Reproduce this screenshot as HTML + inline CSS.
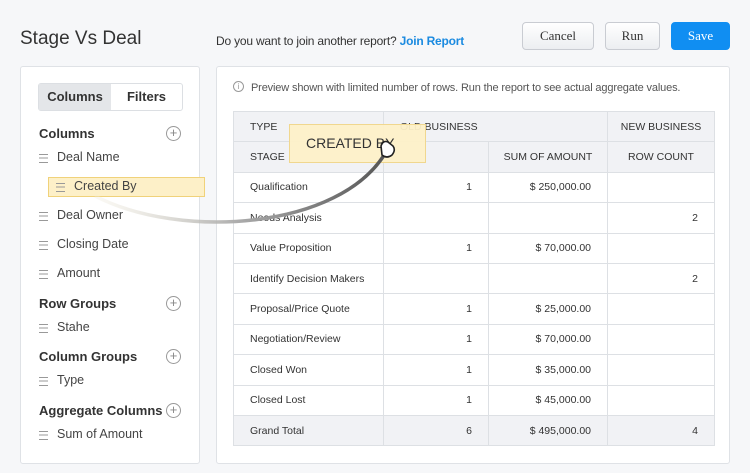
<!DOCTYPE html>
<html><head><style>
*{margin:0;padding:0;box-sizing:border-box}
body{width:750px;height:473px;background:#f6f7f9;font-family:"Liberation Sans",sans-serif;position:relative;overflow:hidden;color:#333}
.a{position:absolute}
.btn{position:absolute;top:22px;height:28px;border:1px solid #c9ccd2;border-radius:4px;background:linear-gradient(#fff,#eceef1);font-family:"Liberation Serif",serif;font-size:13px;color:#333;text-align:center;line-height:26px}
.panel{position:absolute;background:#fff;border:1px solid #dfe2e6;border-radius:3px}
.li{position:absolute;left:39px;font-size:12.5px;color:#444;white-space:nowrap}
.li:before{content:"";position:absolute;left:0;top:4px;width:9px;height:7px;border-top:1px solid #999;border-bottom:1px solid #999;background:linear-gradient(transparent 2.5px,#999 2.5px,#999 3.5px,transparent 3.5px)}
.li span{margin-left:18px}
.h{position:absolute;left:39px;font-size:13px;font-weight:bold;color:#333}
.plus{position:absolute;left:166px;width:15px;height:15px;border:1px solid #999;border-radius:50%;color:#888;font-size:13px;line-height:12px;text-align:center}
table{position:absolute;left:233px;top:111px;border-collapse:collapse;font-size:10.5px;color:#333;table-layout:fixed;width:481px}
td{border:1px solid #dde0e4;height:30.4px;padding:0 16px;white-space:nowrap;overflow:visible}
.hd td{background:#f1f2f5}
.r{text-align:right}
.c{text-align:center;padding:0 4px}
</style></head><body>
<div class="a" style="left:20px;top:28px;font-size:19px;color:#333">Stage Vs Deal</div>
<div class="a" style="left:216px;top:34px;font-size:12px;color:#333;white-space:nowrap;letter-spacing:-.2px">Do you want to join another report? <b style="color:#1a8ae0;font-weight:bold">Join Report</b></div>
<div class="btn" style="left:522px;width:72px">Cancel</div>
<div class="btn" style="left:605px;width:55px">Run</div>
<div class="btn" style="left:671px;width:59px;background:#108ef2;border-color:#108ef2;color:#fff">Save</div>

<div class="panel" style="left:20px;top:66px;width:180px;height:398px"></div>
<div class="a" style="left:38px;top:83px;width:145px;height:28px;border:1px solid #dcdfe3;border-radius:3px;background:#fff"></div>
<div class="a" style="left:39px;top:84px;width:72px;height:26px;background:#e4e6e9;font-size:13px;font-weight:bold;text-align:center;line-height:26px">Columns</div>
<div class="a" style="left:111px;top:84px;width:71px;height:26px;font-size:13px;font-weight:bold;text-align:center;line-height:26px">Filters</div>
<div class="h" style="top:126px">Columns</div><div class="plus" style="top:126px">+</div>
<div class="li" style="top:150px"><span>Deal Name</span></div>
<div class="a" style="left:48px;top:177px;width:157px;height:20px;background:#fdf0c8;border:1px solid #f0d27a"></div>
<div class="li" style="left:56px;top:179px"><span>Created By</span></div>
<div class="li" style="top:208px"><span>Deal Owner</span></div>
<div class="li" style="top:237px"><span>Closing Date</span></div>
<div class="li" style="top:266px"><span>Amount</span></div>
<div class="h" style="top:296px">Row Groups</div><div class="plus" style="top:296px">+</div>
<div class="li" style="top:320px"><span>Stahe</span></div>
<div class="h" style="top:349px">Column Groups</div><div class="plus" style="top:349px">+</div>
<div class="li" style="top:373px"><span>Type</span></div>
<div class="h" style="top:403px">Aggregate Columns</div><div class="plus" style="top:403px">+</div>
<div class="li" style="top:427px"><span>Sum of Amount</span></div>

<div class="panel" style="left:216px;top:66px;width:514px;height:398px"></div>
<div class="a" style="left:233px;top:81px;width:11px;height:11px;border:1px solid #999;border-radius:50%;font-size:8px;text-align:center;line-height:9px;color:#999">i</div>
<div class="a" style="left:251px;top:82px;font-size:11px;color:#555;white-space:nowrap;letter-spacing:-.15px">Preview shown with limited number of rows. Run the report to see actual aggregate values.</div>
<table>
<colgroup><col style="width:150px"><col style="width:105px"><col style="width:119px"><col style="width:107px"></colgroup>
<tr class="hd"><td>TYPE</td><td colspan="2">OLD BUSINESS</td><td class="c">NEW BUSINESS</td></tr>
<tr class="hd"><td>STAGE</td><td></td><td class="c">SUM OF AMOUNT</td><td class="c">ROW COUNT</td></tr>
<tr><td>Qualification</td><td class="r">1</td><td class="r">$ 250,000.00</td><td></td></tr>
<tr><td>Needs Analysis</td><td></td><td></td><td class="r">2</td></tr>
<tr><td>Value Proposition</td><td class="r">1</td><td class="r">$ 70,000.00</td><td></td></tr>
<tr><td>Identify Decision Makers</td><td></td><td></td><td class="r">2</td></tr>
<tr><td>Proposal/Price Quote</td><td class="r">1</td><td class="r">$ 25,000.00</td><td></td></tr>
<tr><td>Negotiation/Review</td><td class="r">1</td><td class="r">$ 70,000.00</td><td></td></tr>
<tr><td>Closed Won</td><td class="r">1</td><td class="r">$ 35,000.00</td><td></td></tr>
<tr><td>Closed Lost</td><td class="r">1</td><td class="r">$ 45,000.00</td><td></td></tr>
<tr class="hd"><td>Grand Total</td><td class="r">6</td><td class="r">$ 495,000.00</td><td class="r">4</td></tr>
</table>
<div class="a" style="left:289px;top:124px;width:137px;height:39px;background:rgba(253,240,200,.95);border:1px solid #f0d78f"></div>
<div class="a" style="left:306px;top:135px;font-size:14px;color:#333">CREATED BY</div>
<svg class="a" style="left:0;top:0" width="750" height="473">
<defs><linearGradient id="g" x1="0" x2="1"><stop offset="0" stop-color="#f0ebdc" stop-opacity=".3"/><stop offset=".5" stop-color="#aaa"/><stop offset="1" stop-color="#555"/></linearGradient></defs>
<path d="M95 196 C180 240 340 230 386 152" stroke="url(#g)" stroke-width="3.5" fill="none"/>
<path d="M381 146 q2-6 7-4 l5 4 q3 4 -1 9 q-5 4 -10 0 z" fill="#fff" stroke="#222" stroke-width="1.6"/>
</svg>
</body></html>
